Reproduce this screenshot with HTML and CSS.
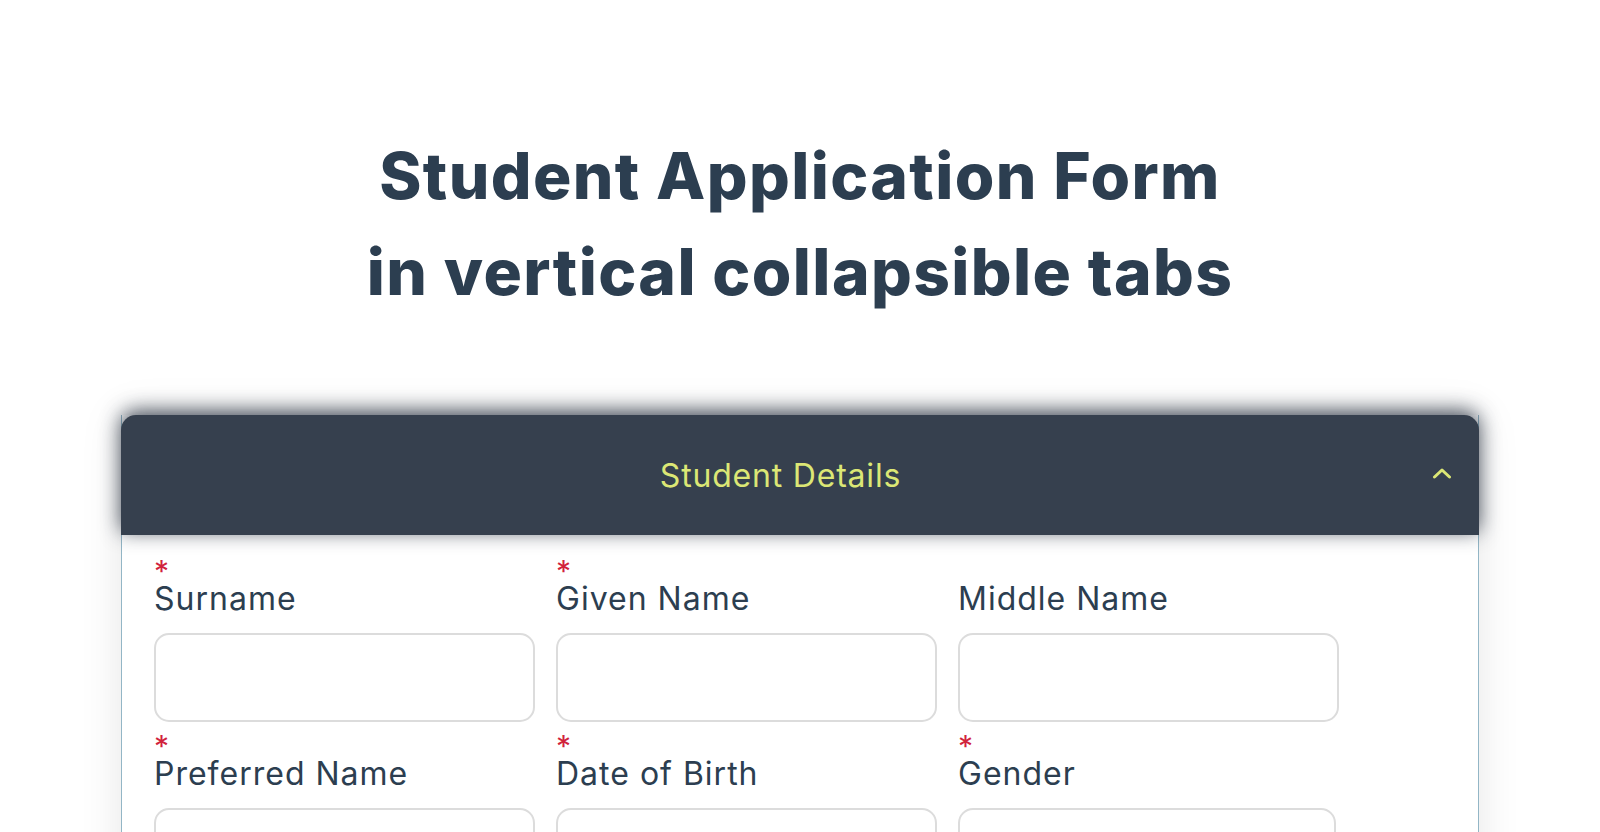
FILE: index.html
```html
<!DOCTYPE html>
<html lang="en">

<head>
    <meta charset="UTF-8">
    <meta name="viewport" content="width=device-width, initial-scale=1.0">
    <title>Student Application Form</title>
    <link rel="stylesheet" href="styles.css">
</head>

<body>
    <h1 class="page-title">Student Application Form<br>in vertical collapsible tabs</h1>

    <div class="tab">
        <div class="tab-header">
            <span class="tab-title">Student Details</span>
            <svg class="tab-icon" width="20" height="12" viewBox="0 0 20 12">
                <polyline points="2.5,10 10,3 17.5,10" fill="none" stroke="#dce775" stroke-width="3"
                    stroke-linecap="round" stroke-linejoin="round" />
            </svg>
        </div>
        <div class="tab-body">
            <div class="field">
                <span class="req">*</span>
                <label for="surname">Surname</label>
                <input type="text" id="surname">
            </div>
            <div class="field">
                <span class="req">*</span>
                <label for="given">Given Name</label>
                <input type="text" id="given">
            </div>
            <div class="field">
                <span class="req"></span>
                <label for="middle">Middle Name</label>
                <input type="text" id="middle">
            </div>
            <div class="field">
                <span class="req">*</span>
                <label for="preferred">Preferred Name</label>
                <input type="text" id="preferred">
            </div>
            <div class="field">
                <span class="req">*</span>
                <label for="dob">Date of Birth</label>
                <input type="text" id="dob">
            </div>
            <div class="field">
                <span class="req">*</span>
                <label for="gender">Gender</label>
                <input type="text" id="gender" class="select">
            </div>
        </div>
    </div>
</body>

</html>
```

FILE: styles.css
```css
body {
    margin: 0;
    font-family: Inter, "Open Sans", sans-serif;
    background-color: #fff;
    color: #2c3e50;
}

.page-title {
    margin: 128px 0 0;
    text-align: center;
    font-size: 64px;
    line-height: 96px;
    font-weight: 800;
    letter-spacing: 1.4px;
    color: #2c3e50;
}

.tab {
    width: 1358px;
    margin: 95px auto 0;
    border-left: 1px solid #93b6c6;
    border-right: 1px solid #93b6c6;
    box-sizing: border-box;
    box-shadow: 0 0 40px rgba(0, 0, 0, 0.1);
}

.tab-header {
    display: flex;
    align-items: center;
    height: 120px;
    margin: 0 -1px;
    padding: 0 27px 0 8px;
    background-color: #36404e;
    border-radius: 15px 15px 0 0;
    box-shadow: 0 -4px 20px rgba(25, 35, 50, 0.8);
}

.tab-title {
    flex: 1;
    text-align: center;
    font-size: 32px;
    letter-spacing: 0.8px;
    color: #dce775;
}

.tab-icon {
    margin-bottom: 4px;
}

.tab-body {
    display: grid;
    grid-template-columns: repeat(3, 381px);
    column-gap: 21px;
    row-gap: 12px;
    padding: 24px 32px 40px;
}

.field {
    display: flex;
    flex-direction: column;
}

.req {
    height: 22px;
    font-size: 30px;
    line-height: 25px;
    color: #d1233c;
}

.field label {
    font-size: 32px;
    line-height: 36px;
    letter-spacing: 1px;
    color: #2c3e50;
}

.field input {
    height: 89px;
    margin-top: 16px;
    border: 2px solid #dcdcdc;
    border-radius: 15px;
    box-sizing: border-box;
    font-family: inherit;
}

.field input.select {
    width: 378px;
}
```
